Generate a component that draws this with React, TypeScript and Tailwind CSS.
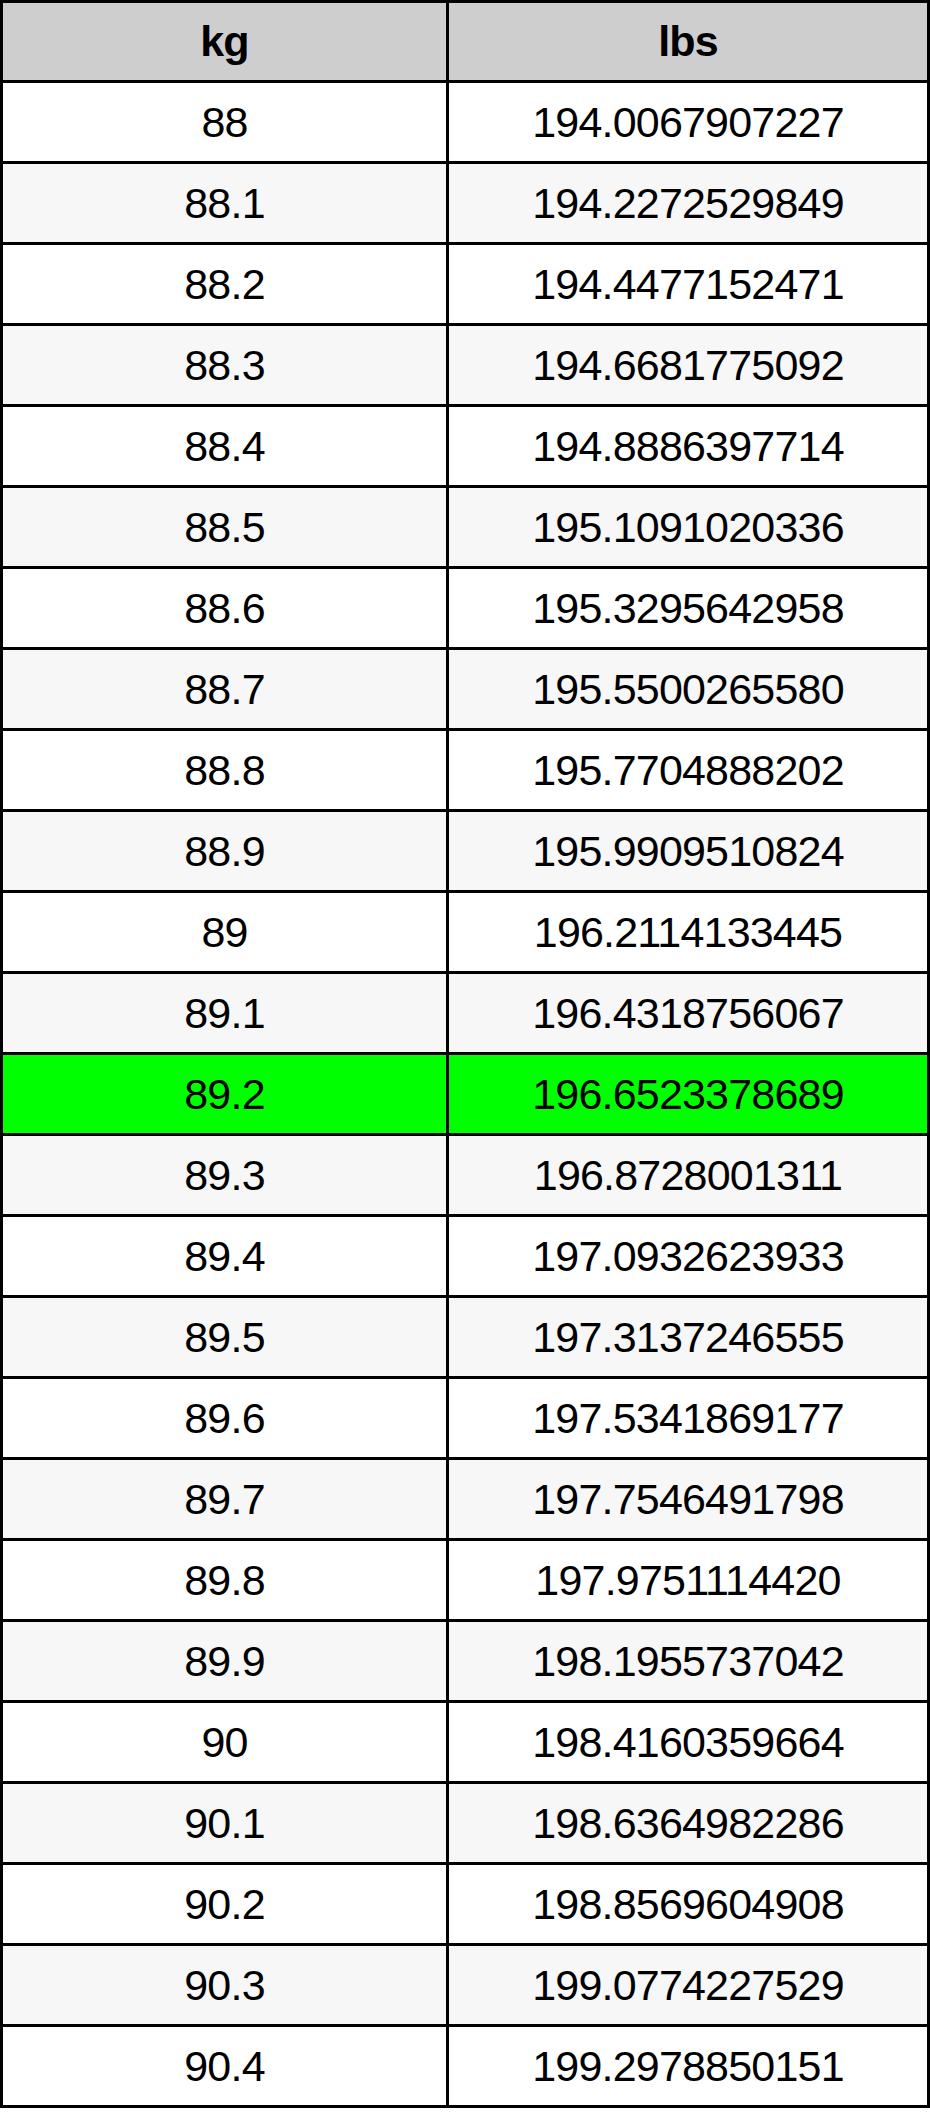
const rows: [string, string][] = [
  ['88', '194.0067907227'],
  ['88.1', '194.2272529849'],
  ['88.2', '194.4477152471'],
  ['88.3', '194.6681775092'],
  ['88.4', '194.8886397714'],
  ['88.5', '195.1091020336'],
  ['88.6', '195.3295642958'],
  ['88.7', '195.5500265580'],
  ['88.8', '195.7704888202'],
  ['88.9', '195.9909510824'],
  ['89', '196.2114133445'],
  ['89.1', '196.4318756067'],
  ['89.2', '196.6523378689'],
  ['89.3', '196.8728001311'],
  ['89.4', '197.0932623933'],
  ['89.5', '197.3137246555'],
  ['89.6', '197.5341869177'],
  ['89.7', '197.7546491798'],
  ['89.8', '197.9751114420'],
  ['89.9', '198.1955737042'],
  ['90', '198.4160359664'],
  ['90.1', '198.6364982286'],
  ['90.2', '198.8569604908'],
  ['90.3', '199.0774227529'],
  ['90.4', '199.2978850151'],
];

const HIGHLIGHT = '89.2';

function Cell({ text, bold, first }: { text: string; bold?: boolean; first?: boolean }) {
  return (
    <div
      className={`flex items-center justify-center ${
        first ? 'w-[446px] border-r-[3px] border-black' : 'flex-1'
      }`}
    >
      <span
        className={`text-[43px] leading-none text-black tracking-[-0.8px] ${
          bold ? 'font-bold' : 'font-normal'
        }`}
      >
        {text}
      </span>
    </div>
  );
}

export default function App() {
  return (
    <div
      className="w-[930px] bg-white"
      style={{ fontFamily: '"Liberation Sans", Arial, sans-serif' }}
    >
      <div className="border-[3px] border-black">
        <div className="flex h-[80px] border-b-[3px] border-black bg-[#cecece]">
          <Cell text="kg" bold first />
          <Cell text="lbs" bold />
        </div>
        {rows.map(([kg, lbs], i) => {
          const bg =
            kg === HIGHLIGHT ? 'bg-[#00ff00]' : i % 2 === 0 ? 'bg-white' : 'bg-[#f7f7f7]';
          const last = i === rows.length - 1;
          return (
            <div
              key={kg}
              className={`flex ${last ? 'h-[78px]' : 'h-[81px] border-b-[3px] border-black'} ${bg}`}
            >
              <Cell text={kg} first />
              <Cell text={lbs} />
            </div>
          );
        })}
      </div>
    </div>
  );
}
